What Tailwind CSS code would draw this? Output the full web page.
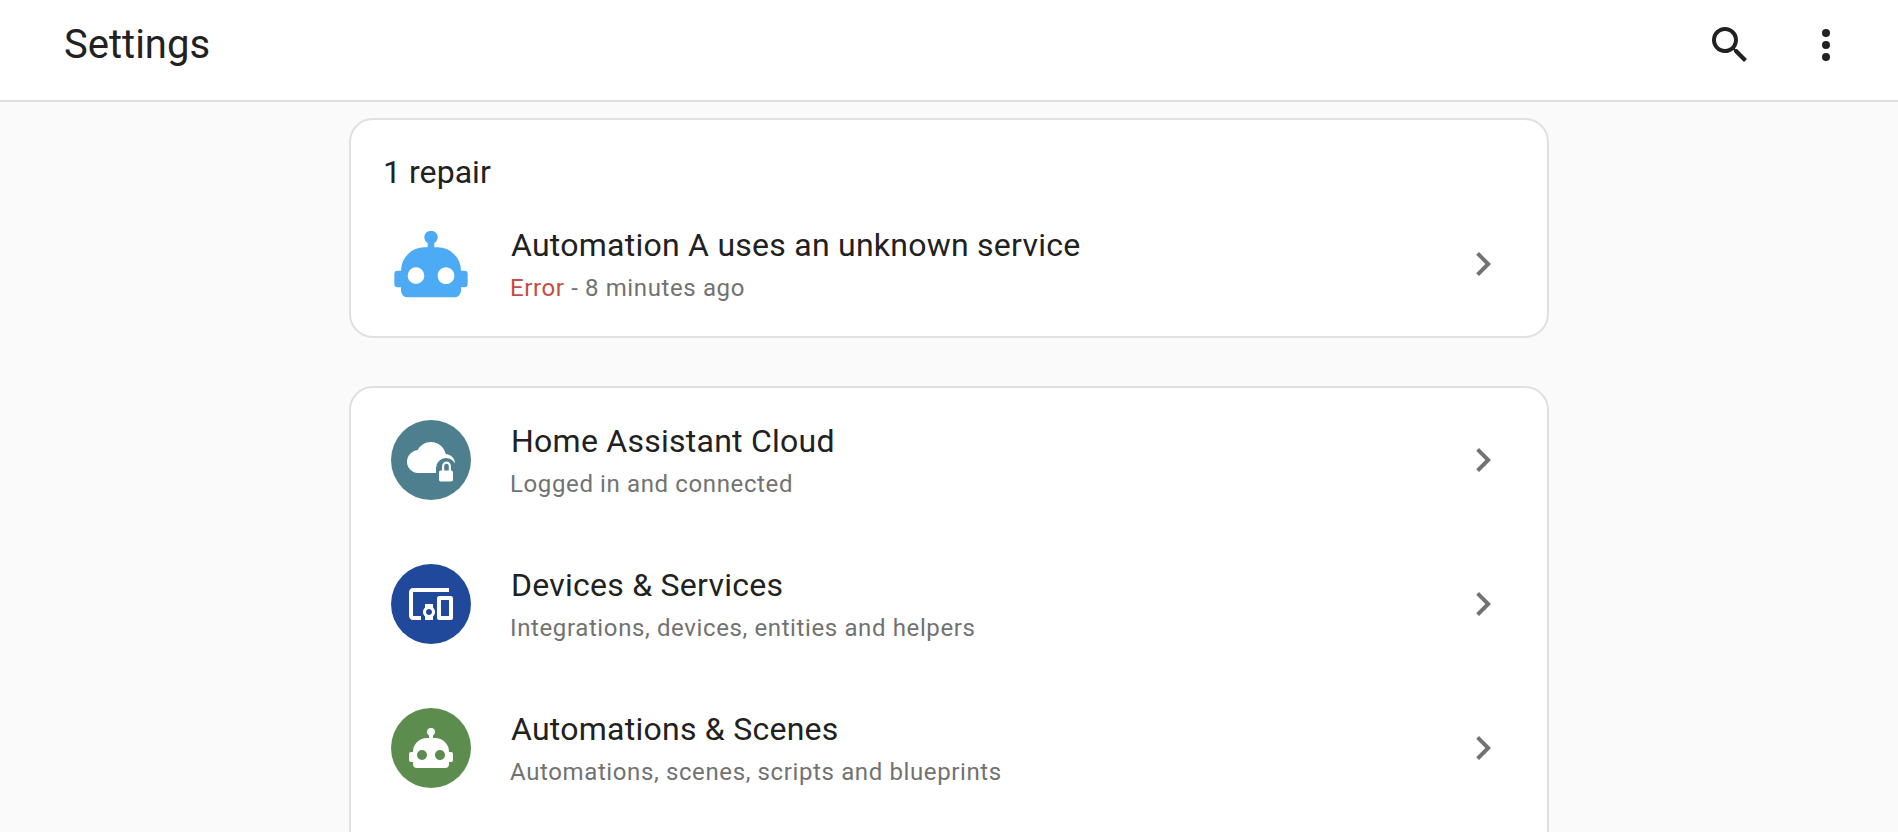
<!doctype html>
<html>
<head>
<meta charset="utf-8">
<script src="https://cdn.jsdelivr.net/npm/@tailwindcss/browser@4"></script>
</head>
<body class="m-0 bg-[#fafafa] font-['Roboto',sans-serif] text-[#212121] overflow-hidden antialiased">
<div class="h-[832px] overflow-hidden flex flex-col">
  <header class="h-[102px] shrink-0 bg-white border-b-2 border-[#e0e0e0] flex items-start pl-[64px] pr-[48px]">
    <div class="h-[90px] flex items-center flex-1 text-[40px]">Settings</div>
    <div class="h-[90px] flex items-center gap-[48px]">
      <svg class="w-[48px] h-[48px] fill-[#212121]" viewBox="0 0 24 24"><path d="M9.5,3A6.5,6.5 0 0,1 16,9.5C16,11.11 15.41,12.59 14.44,13.73L14.71,14H15.5L20.5,19L19,20.5L14,15.5V14.71L13.73,14.44C12.59,15.41 11.11,16 9.5,16A6.5,6.5 0 0,1 3,9.5A6.5,6.5 0 0,1 9.5,3M9.5,5C7,5 5,7 5,9.5C5,12 7,14 9.5,14C12,14 14,12 14,9.5C14,7 12,5 9.5,5Z"/></svg>
      <svg class="w-[48px] h-[48px] fill-[#212121]" viewBox="0 0 24 24"><path d="M12,16A2,2 0 0,1 14,18A2,2 0 0,1 12,20A2,2 0 0,1 10,18A2,2 0 0,1 12,16M12,10A2,2 0 0,1 14,12A2,2 0 0,1 12,14A2,2 0 0,1 10,12A2,2 0 0,1 12,10M12,4A2,2 0 0,1 14,6A2,2 0 0,1 12,8A2,2 0 0,1 10,6A2,2 0 0,1 12,4Z"/></svg>
    </div>
  </header>
  <main class="w-[1200px] ml-[349px] pt-[16px] flex flex-col gap-[48px]">
    <section class="h-[220px] bg-white border-2 border-[#e0e0e0] rounded-[24px] box-border">
      <div class="pl-[32px] pt-[32px] text-[32px] leading-[40px] tracking-[0.05px]">1 repair</div>
      <div class="flex items-center h-[144px] pl-[40px] pr-[40px]">
        <svg class="w-[80px] h-[80px] shrink-0 fill-[#4daaf5]" viewBox="0 0 24 24"><path d="M12,2A2,2 0 0,1 14,4C14,4.74 13.6,5.39 13,5.73V7H14A7,7 0 0,1 21,14H22A1,1 0 0,1 23,15V18A1,1 0 0,1 22,19H21V20A2,2 0 0,1 19,22H5A2,2 0 0,1 3,20V19H2A1,1 0 0,1 1,18V15A1,1 0 0,1 2,14H3A7,7 0 0,1 10,7H11V5.73C10.4,5.39 10,4.74 10,4A2,2 0 0,1 12,2M7.5,13A2.5,2.5 0 0,0 5,15.5A2.5,2.5 0 0,0 7.5,18A2.5,2.5 0 0,0 10,15.5A2.5,2.5 0 0,0 7.5,13M16.5,13C15.12,13 14,14.12 14,15.5C14,16.88 15.12,18 16.5,18C17.88,18 19,16.88 19,15.5C19,14.12 17.88,13 16.5,13Z"/></svg>
        <div class="ml-[40px] flex-1 pt-[4px]">
          <div class="text-[32px] leading-[40px] tracking-[0.25px]">Automation A uses an unknown service</div>
          <div class="text-[24px] leading-[40px] tracking-[0.62px] text-[#727272] mt-[3px] ml-[-1px]"><span class="text-[#c84c3f]">Error</span> - 8 minutes ago</div>
        </div>
        <svg class="w-[48px] h-[48px] shrink-0 fill-[#727272]" viewBox="0 0 24 24"><path d="M8.59,16.58L13.17,12L8.59,7.41L10,6L16,12L10,18L8.59,16.58Z"/></svg>
      </div>
    </section>
    <section class="h-[600px] bg-white border-2 border-[#e0e0e0] rounded-[24px] box-border">
      <div class="flex items-center h-[144px] pl-[40px] pr-[40px]">
        <div class="w-[80px] h-[80px] shrink-0 rounded-full bg-[#4d7f8f] flex items-center justify-center">
          <svg class="w-[48px] h-[48px]" viewBox="0 0 24 24"><path fill="#fff" d="M19.35 9.04C18.67 5.59 15.64 3 12 3 9.11 3 6.6 4.64 5.35 7.04 2.34 7.36 0 9.91 0 13 0 16 2.69 18.5 5.5 18.5H18.5C21.7 18.5 24 16.5 24 13.7 24 11.2 21.9 9.2 19.35 9.04Z"/><circle cx="19.5" cy="16" r="5" fill="#4d7f8f"/><path fill="#4d7f8f" d="M14.5 16H24.5V24H14.5Z"/><path fill="#fff" fill-rule="evenodd" d="M16.9 17.3H17.5V15.2a2.25 2.4 0 0 1 4.5 0V17.3H22.1a.9.9 0 0 1 .9.9V21.9a.9.9 0 0 1-.9.9H16.9a.9.9 0 0 1-.9-.9V18.2a.9.9 0 0 1 .9-.9ZM18.6 17.3H20.9V15.2a1.15 1.3 0 0 0-2.3 0Z"/></svg>
        </div>
        <div class="ml-[40px] flex-1 pt-[4px]">
          <div class="text-[32px] leading-[40px] tracking-[0.25px]">Home Assistant Cloud</div>
          <div class="text-[24px] leading-[40px] tracking-[0.62px] text-[#727272] mt-[3px] ml-[-1px]">Logged in and connected</div>
        </div>
        <svg class="w-[48px] h-[48px] shrink-0 fill-[#727272]" viewBox="0 0 24 24"><path d="M8.59,16.58L13.17,12L8.59,7.41L10,6L16,12L10,18L8.59,16.58Z"/></svg>
      </div>
      <div class="flex items-center h-[144px] pl-[40px] pr-[40px]">
        <div class="w-[80px] h-[80px] shrink-0 rounded-full bg-[#20499c] flex items-center justify-center">
          <svg class="w-[48px] h-[48px] fill-white" viewBox="0 0 24 24"><path d="M3 6H21V4H3C1.9 4 1 4.9 1 6V18C1 19.1 1.9 20 3 20H7V18H3V6M13 12H9V13.78C8.39 14.33 8 15.11 8 16C8 16.89 8.39 17.67 9 18.22V20H13V18.22C13.61 17.67 14 16.88 14 16S13.61 14.33 13 13.78V12M11 17.5C10.17 17.5 9.5 16.83 9.5 16S10.17 14.5 11 14.5 12.5 15.17 12.5 16 11.83 17.5 11 17.5M22 8H16C15.5 8 15 8.5 15 9V19C15 19.5 15.5 20 16 20H22C22.5 20 23 19.5 23 19V9C23 8.5 22.5 8 22 8M21 18H17V10H21V18Z"/></svg>
        </div>
        <div class="ml-[40px] flex-1 pt-[4px]">
          <div class="text-[32px] leading-[40px] tracking-[0.25px]">Devices &amp; Services</div>
          <div class="text-[24px] leading-[40px] tracking-[0.62px] text-[#727272] mt-[3px] ml-[-1px]">Integrations, devices, entities and helpers</div>
        </div>
        <svg class="w-[48px] h-[48px] shrink-0 fill-[#727272]" viewBox="0 0 24 24"><path d="M8.59,16.58L13.17,12L8.59,7.41L10,6L16,12L10,18L8.59,16.58Z"/></svg>
      </div>
      <div class="flex items-center h-[144px] pl-[40px] pr-[40px]">
        <div class="w-[80px] h-[80px] shrink-0 rounded-full bg-[#5c8d4e] flex items-center justify-center">
          <svg class="w-[48px] h-[48px] fill-white" viewBox="0 0 24 24"><path d="M12,2A2,2 0 0,1 14,4C14,4.74 13.6,5.39 13,5.73V7H14A7,7 0 0,1 21,14H22A1,1 0 0,1 23,15V18A1,1 0 0,1 22,19H21V20A2,2 0 0,1 19,22H5A2,2 0 0,1 3,20V19H2A1,1 0 0,1 1,18V15A1,1 0 0,1 2,14H3A7,7 0 0,1 10,7H11V5.73C10.4,5.39 10,4.74 10,4A2,2 0 0,1 12,2M7.5,13A2.5,2.5 0 0,0 5,15.5A2.5,2.5 0 0,0 7.5,18A2.5,2.5 0 0,0 10,15.5A2.5,2.5 0 0,0 7.5,13M16.5,13C15.12,13 14,14.12 14,15.5C14,16.88 15.12,18 16.5,18C17.88,18 19,16.88 19,15.5C19,14.12 17.88,13 16.5,13Z"/></svg>
        </div>
        <div class="ml-[40px] flex-1 pt-[4px]">
          <div class="text-[32px] leading-[40px] tracking-[0.25px]">Automations &amp; Scenes</div>
          <div class="text-[24px] leading-[40px] tracking-[0.62px] text-[#727272] mt-[3px] ml-[-1px]">Automations, scenes, scripts and blueprints</div>
        </div>
        <svg class="w-[48px] h-[48px] shrink-0 fill-[#727272]" viewBox="0 0 24 24"><path d="M8.59,16.58L13.17,12L8.59,7.41L10,6L16,12L10,18L8.59,16.58Z"/></svg>
      </div>
    </section>
  </main>
</div>
</body>
</html>
